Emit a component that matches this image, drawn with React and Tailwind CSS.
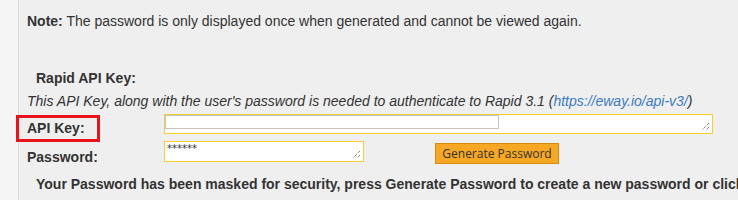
import React from 'react';

const Grip = () => (
  <svg className="absolute right-[2px] bottom-[2px]" width="9" height="9" viewBox="0 0 9 9">
    <path d="M8 1L1 8M8 5L5 8" stroke="#555" strokeWidth="1" strokeDasharray="1 1" />
  </svg>
);

const App = () => {
  return (
    <div className="flex w-[738px] h-[200px] overflow-hidden bg-[#efefef] text-[#333] font-['Liberation_Sans',Arial,sans-serif]">
      <div className="w-[19px] shrink-0 bg-[#f5f5f5] border-r border-[#dcdcdc]" />
      <div className="flex-1 whitespace-nowrap">
        <p className="mt-[13px] ml-2 text-[14px] leading-4">
          <b>Note:</b> The password is only displayed once when generated and cannot be viewed again.
        </p>
        <p className="mt-[41px] ml-[17px] text-[14px] font-bold leading-4">Rapid API Key:</p>
        <p className="mt-[7px] ml-2 text-[14px] italic leading-4">
          This API Key, along with the user's password is needed to authenticate to Rapid 3.1 (
          <span className="text-[#3b7bbf]">https://eway.io/api-v3/</span>)
        </p>

        <div className="mt-[5px] flex items-start">
          <div className="w-[145px] shrink-0">
            <div className="-ml-[3px] mt-px w-[84px] h-[27px] border-[3px] border-[#e8141c] pl-2 text-[14px] font-bold leading-[21px]">
              API Key:
            </div>
          </div>
          <div className="relative w-[549px] h-[20px] bg-white border border-[#f8cf2c]">
            <div className="w-[334px] h-[14px] border border-[#c4c4c4] bg-white" />
            <Grip />
          </div>
        </div>

        <div className="-mt-px flex items-start">
          <div className="w-[145px] shrink-0 pl-2 pt-[8px] text-[14px] font-bold leading-4">Password:</div>
          <div className="relative w-[200px] h-[21px] bg-white border border-[#f8cf2c] pl-[2px] text-[10px] leading-[14px] font-['DejaVu_Sans',sans-serif]">
            ******
            <Grip />
          </div>
          <button className="ml-[71px] mt-[2px] w-[124px] h-[21px] bg-[#f6a723] border border-[#d98c0c] text-[12px] leading-[19px] text-[#333] font-['Open_Sans',sans-serif]">
            Generate Password
          </button>
        </div>

        <p className="mt-[11px] ml-[17px] text-[14px] font-bold leading-4">
          Your Password has been masked for security, press Generate Password to create a new password or click here to view it.
        </p>
      </div>
    </div>
  );
};

export default App;
